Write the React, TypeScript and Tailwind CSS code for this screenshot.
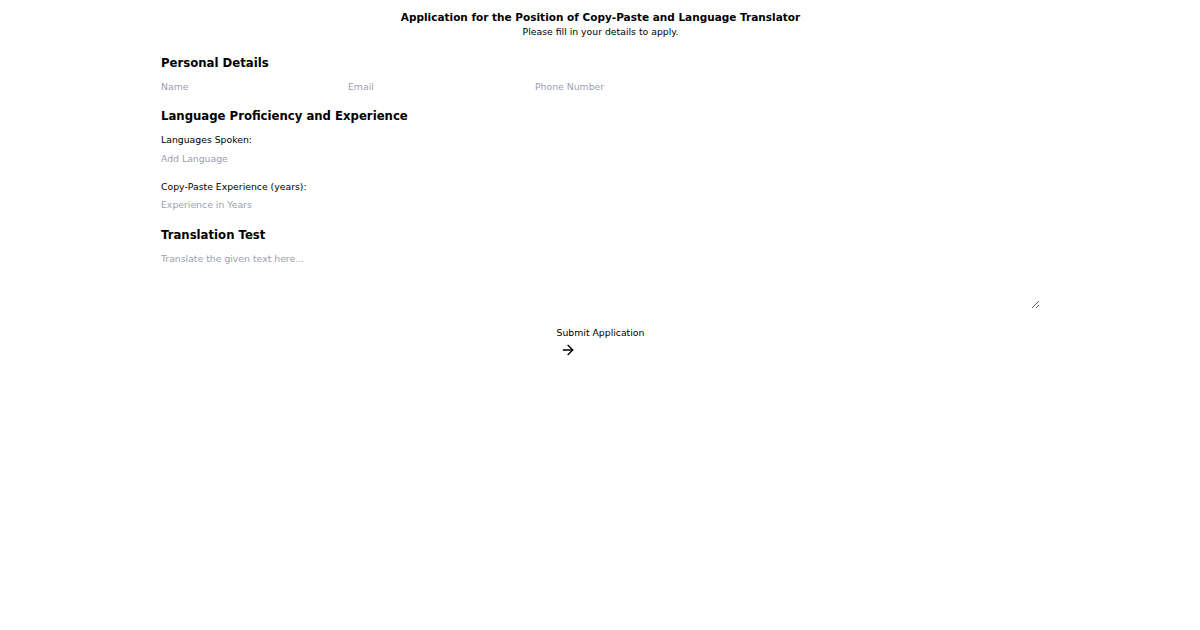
import React from 'react';
import { ArrowRight } from 'lucide-react';

const App: React.FC = () => {
  return (
    <div className="min-h-screen bg-white text-black font-['DejaVu_Sans',sans-serif]">
      <div className="max-w-4xl mx-auto pt-[9px] pl-[9px] pr-2">
        <div className="text-center">
          <h1 className="text-[10.5px] font-bold leading-[16px]">
            Application for the Position of Copy-Paste and Language Translator
          </h1>
          <p className="text-[9.3px] leading-[14px]">Please fill in your details to apply.</p>
        </div>

        <form className="mt-[15px]">
          {/* Personal details */}
          <section>
            <h2 className="text-[11.7px] font-bold leading-[18px]">Personal Details</h2>
            <div className="mt-[8px] flex">
              <input type="text" placeholder="Name" className="w-[187px] text-[9.3px] leading-[14px] placeholder-gray-400 outline-none" />
              <input type="email" placeholder="Email" className="w-[187px] text-[9.3px] leading-[14px] placeholder-gray-400 outline-none" />
              <input type="tel" placeholder="Phone Number" className="w-[187px] text-[9.3px] leading-[14px] placeholder-gray-400 outline-none" />
            </div>
          </section>

          {/* Languages */}
          <section className="mt-[13px]">
            <h2 className="text-[11.7px] font-bold leading-[18px]">Language Proficiency and Experience</h2>
            <label className="mt-[8px] block text-[9.3px] leading-[14px]">Languages Spoken:</label>
            <input type="text" placeholder="Add Language" className="mt-[5px] block text-[9.3px] leading-[14px] placeholder-gray-400 outline-none" />
            <label className="mt-[14px] block text-[9.3px] leading-[14px]">Copy-Paste Experience (years):</label>
            <input type="number" placeholder="Experience in Years" className="mt-[4px] block text-[9.3px] leading-[14px] placeholder-gray-400 outline-none" />
          </section>

          {/* Translation */}
          <section className="mt-[14px]">
            <h2 className="text-[11.7px] font-bold leading-[18px]">Translation Test</h2>
            <textarea
              placeholder="Translate the given text here..."
              className="mt-[8px] block w-full h-[57px] text-[9.3px] leading-[14px] placeholder-gray-400 outline-none"
            />
          </section>

          <div className="mt-[17px] flex justify-center">
            <button type="submit" className="text-[9.3px] leading-[14px] text-left">
              Submit Application
              <ArrowRight className="ml-[3px] mt-[2px] h-4 w-4" />
            </button>
          </div>
        </form>
      </div>
    </div>
  );
};

export default App;
